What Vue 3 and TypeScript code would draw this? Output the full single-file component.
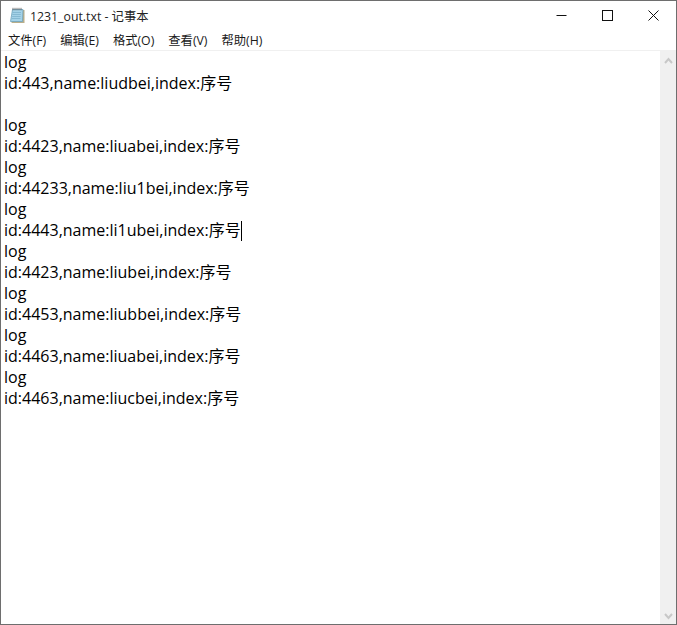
<script setup lang="ts">
const menus: string[] = ['文件(F)', '编辑(E)', '格式(O)', '查看(V)', '帮助(H)']
const lines: string[] = [
  'log', 'id:443,name:liudbei,index:序号', '',
  'log', 'id:4423,name:liuabei,index:序号',
  'log', 'id:44233,name:liu1bei,index:序号',
  'log', 'id:4443,name:li1ubei,index:序号',
  'log', 'id:4423,name:liubei,index:序号',
  'log', 'id:4453,name:liubbei,index:序号',
  'log', 'id:4463,name:liuabei,index:序号',
  'log', 'id:4463,name:liucbei,index:序号'
]
</script>

<template>
  <div class="window">
    <header class="titlebar">
      <svg class="app-icon" width="17" height="17" viewBox="0 0 17 17">
        <path d="M4 3h11.500v13H2.500z" fill="#b9ae8a" />
        <path d="M3.500 2.500h10.500l-0.500 12H1.500z" fill="#a4d2e8" stroke="#6ea3bd" stroke-width="0.8" />
        <path d="M3.500 5.500h8.500M3.300 7.500h8.500M3.100 9.500h8.500M2.900 11.500h8.500" stroke="#7fb3cc" stroke-width="0.8" />
        <path d="M4 0.800v2.500M6 0.800v2.500M8 0.800v2.500M10 0.800v2.500M12 0.800v2.500" stroke="#555" stroke-width="0.8" />
      </svg>
      <span class="title">1231_out.txt - 记事本</span>
      <div class="controls">
        <button class="ctl"><svg width="11" height="11" viewBox="0 0 11 11"><path d="M0.500 5.500h10" stroke="#111" stroke-width="1" /></svg></button>
        <button class="ctl"><svg width="11" height="11" viewBox="0 0 11 11"><rect x="0.500" y="0.500" width="10" height="10" fill="none" stroke="#111" stroke-width="1" /></svg></button>
        <button class="ctl"><svg width="11" height="11" viewBox="0 0 11 11"><path d="M0.500 0.500l10 10M10.500 0.500l-10 10" stroke="#111" stroke-width="1" /></svg></button>
      </div>
    </header>
    <nav class="menubar">
      <span v-for="m in menus" :key="m" class="menu">{{ m }}</span>
    </nav>
    <main class="body">
      <div class="editor">
        <div v-for="(l, i) in lines" :key="i" class="line">{{ l }}<i v-if="i === 8" class="caret"></i></div>
      </div>
      <aside class="scrollbar">
        <svg width="9" height="7" viewBox="0 0 9 7"><path d="M1 6l3.500-4 3.500 4" fill="none" stroke="#c8c8c8" stroke-width="2" /></svg>
        <svg width="9" height="7" viewBox="0 0 9 7"><path d="M1 1l3.500 4 3.500-4" fill="none" stroke="#c8c8c8" stroke-width="2" /></svg>
      </aside>
    </main>
  </div>
</template>

<style>
html, body { margin: 0; background: #fff; }
</style>

<style scoped>
.window {
  box-sizing: border-box;
  width: 677px;
  height: 625px;
  border: 1px solid #6e6e6e;
  background: #fff;
  display: flex;
  flex-direction: column;
  font-family: "Open Sans", "Noto Sans CJK SC", sans-serif;
  color: #000;
  overflow: hidden;
}
.titlebar {
  height: 29px;
  display: flex;
  align-items: center;
  padding-left: 8px;
  flex: none;
}
.app-icon { margin-right: 4px; }
.title { font-size: 12.300px; color: #222; }
.controls { margin-left: auto; display: flex; align-self: stretch; }
.ctl {
  width: 46px;
  border: 0;
  background: none;
  padding: 0;
  display: flex;
  align-items: center;
  justify-content: center;
}
.menubar {
  height: 19px;
  padding: 0 0 1px 7px;
  display: flex;
  align-items: center;
  gap: 14px;
  flex: none;
  font-size: 12.300px;
  color: #1a1a1a;
}
.body {
  flex: 1;
  display: flex;
  min-height: 0;
  border-top: 1px solid #f0f0f0;
}
.editor {
  flex: 1;
  padding: 1px 0 0 3px;
  font-size: 16px;
  line-height: 21px;
  white-space: pre;
}
.line { height: 21px; }
.caret {
  display: inline-block;
  width: 1px;
  height: 20px;
  background: #000;
  vertical-align: -5px;
}
.scrollbar {
  width: 16px;
  background: #f0f0f0;
  display: flex;
  flex-direction: column;
  align-items: center;
  justify-content: space-between;
  padding: 6px 0 4px;
  box-sizing: border-box;
}
</style>
